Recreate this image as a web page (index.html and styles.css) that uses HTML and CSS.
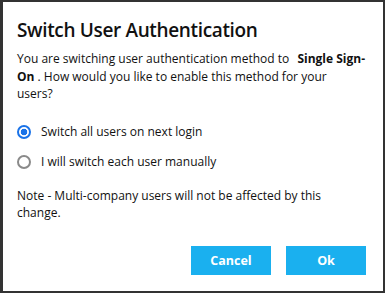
FILE: index.html
```html
<!DOCTYPE html>
<html>
<head>
<meta charset="utf-8">
<link rel="stylesheet" href="styles.css">
</head>
<body>
<div class="dialog">
  <h1 class="title">Switch User Authentication</h1>
  <p class="intro">You are switching user authentication method to <b class="method">Single Sign-On</b> . How would you like to enable this method for your<br>users?</p>
  <div class="options">
    <label class="option"><span class="radio checked"></span><span>Switch all users on next login</span></label>
    <label class="option"><span class="radio"></span><span>I will switch each user manually</span></label>
  </div>
  <p class="note">Note - Multi-company users will not be affected by this change.</p>
  <div class="actions">
    <button class="btn">Cancel</button>
    <button class="btn">Ok</button>
  </div>
</div>
</body>
</html>
```
FILE: styles.css
```css
html, body { margin: 0; padding: 0; background: #fff; }
.dialog {
  width: 385px; height: 293px; box-sizing: border-box;
  border: 2px solid #333; border-left-width: 3px;
  padding: 15px 17px 0 14px;
  font-family: "Open Sans", sans-serif; color: #111;
  display: flex; flex-direction: column;
}
.title { margin: 0; font-size: 19px; font-weight: 600; line-height: 26px; letter-spacing: -0.35px; color: #111; }
.intro { margin: 7px 0 0; font-size: 12px; line-height: 17.5px; }
.method { font-weight: 700; margin-left: 5px; }
.options { display: flex; flex-direction: column; gap: 12px; margin-top: 20px; }
.option { display: flex; align-items: center; gap: 10px; font-size: 12px; line-height: 18px; }
.radio { width: 14px; height: 14px; box-sizing: border-box; border-radius: 50%; border: 2px solid #8a8a8a; flex: none; margin-left: 0; }
.radio.checked { border-color: #1a73e8; background: radial-gradient(circle, #1a73e8 0 3px, #fff 3.6px); }
.note { margin: 16px 0 0; font-size: 12px; line-height: 17.5px; }
.actions { display: flex; justify-content: flex-end; gap: 15px; margin-top: 24px; }
.btn { width: 80px; height: 29px; border: 0; background: #1ab0ef; color: #fff; font-family: "Open Sans", sans-serif; font-weight: 700; font-size: 12.5px; padding: 0; }
```
